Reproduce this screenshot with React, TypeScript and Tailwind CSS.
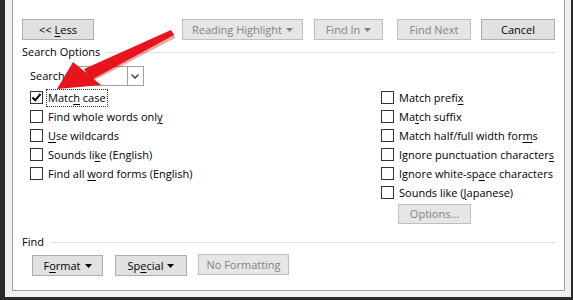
import React from 'react';

const Caret = ({ color = '#000' }: { color?: string }) => (
  <svg width="7" height="4" viewBox="0 0 7 4" className="ml-[4px] mt-[1px]">
    <path d="M0 0 L7 0 L3.5 4 Z" fill={color} />
  </svg>
);

const Btn = ({
  children,
  width,
  disabled,
  caret,
}: {
  children: React.ReactNode;
  width: string;
  disabled?: boolean;
  caret?: boolean;
}) => (
  <div
    className={`${width} h-[21px] flex items-center justify-center border ${
      disabled ? 'border-[#bfbfbf] bg-[#e6e6e6] text-[#838383]' : 'border-[#adadad] bg-[#e1e1e1] text-black'
    }`}
  >
    <span>{children}</span>
    {caret && <Caret color={disabled ? '#838383' : '#000'} />}
  </div>
);

const Check = ({ label, checked, focus }: { label: React.ReactNode; checked?: boolean; focus?: boolean }) => (
  <div className="h-[19px] flex items-center whitespace-nowrap">
    <div className="w-[13px] h-[13px] shrink-0 border border-[#333333] bg-white flex items-center justify-center">
      {checked && (
        <svg width="11" height="11" viewBox="0 0 11 11">
          <path d="M1.5 5.5 L4.2 8.3 L9.5 2" stroke="#000" strokeWidth="2" fill="none" />
        </svg>
      )}
    </div>
    <span className={`ml-[4px] px-[1px] leading-[16px] ${focus ? 'outline outline-1 outline-dotted outline-[#333]' : ''}`}>
      {label}
    </span>
  </div>
);

const U = ({ children }: { children: React.ReactNode }) => (
  <span className="underline underline-offset-[2px] decoration-1">{children}</span>
);

export default function App() {
  return (
    <div className="relative w-[573px] h-[300px] bg-[#2b2b2b] pl-[5px] pr-[2px] pb-[3px] font-['Open_Sans',sans-serif] text-[11px] text-black leading-[16px] overflow-hidden">
      <div className="h-full bg-[#f0f0f0] pl-[7px] pr-[6px] pb-[6px]">
        <div className="h-full bg-white border-x border-b border-[#a0a0a0] flex flex-col">
          {/* top buttons */}
          <div className="flex mt-[19px] ml-[9px]">
            <Btn width="w-[72px]">
              {'<< '}
              <U>L</U>ess
            </Btn>
            <div className="ml-[88px]">
              <Btn width="w-[121px]" disabled caret>
                Reading Highlight
              </Btn>
            </div>
            <div className="ml-[11px]">
              <Btn width="w-[69px]" disabled caret>
                Find In
              </Btn>
            </div>
            <div className="ml-[14px]">
              <Btn width="w-[74px]" disabled>
                Find Next
              </Btn>
            </div>
            <div className="ml-[10px]">
              <Btn width="w-[74px]">Cancel</Btn>
            </div>
          </div>

          {/* Search Options header */}
          <div className="flex items-center mt-[4px] ml-[9px] mr-[8px] h-[16px]">
            <span>Search Options</span>
            <div className="flex-1 h-px bg-[#dce3ea] ml-[5px]" />
          </div>

          {/* Search select */}
          <div className="flex items-center mt-[6px] ml-[17px] h-[20px]">
            <span>Search:</span>
            <div className="ml-[5px] w-[71px] h-[20px] border border-[#a0a0a0] flex items-center">
              <span className="flex-1 pl-[3px]">All</span>
              <div className="w-[16px] h-full border-l border-[#a0a0a0] flex items-center justify-center">
                <svg width="8" height="5" viewBox="0 0 8 5">
                  <path d="M0.5 0.5 L4 4 L7.5 0.5" stroke="#333" strokeWidth="1.3" fill="none" />
                </svg>
              </div>
            </div>
          </div>

          {/* options columns */}
          <div className="flex mt-[2px] ml-[17px]">
            <div className="w-[351px] shrink-0">
              <Check
                checked
                focus
                label={
                  <>
                    Matc<U>h</U> case
                  </>
                }
              />
              <Check
                label={
                  <>
                    Find whole words onl<U>y</U>
                  </>
                }
              />
              <Check
                label={
                  <>
                    <U>U</U>se wildcards
                  </>
                }
              />
              <Check
                label={
                  <>
                    Sounds li<U>k</U>e (English)
                  </>
                }
              />
              <Check
                label={
                  <>
                    Find all <U>w</U>ord forms (English)
                  </>
                }
              />
            </div>
            <div className="flex flex-col shrink-0">
              <Check
                label={
                  <>
                    Match prefi<U>x</U>
                  </>
                }
              />
              <Check
                label={
                  <>
                    Ma<U>t</U>ch suffix
                  </>
                }
              />
              <Check
                label={
                  <>
                    Match half/full width for<U>m</U>s
                  </>
                }
              />
              <Check
                label={
                  <>
                    Ignore punctuation character<U>s</U>
                  </>
                }
              />
              <Check
                label={
                  <>
                    Ignore white-sp<U>a</U>ce characters
                  </>
                }
              />
              <Check
                label={
                  <>
                    Sounds like (<U>J</U>apanese)
                  </>
                }
              />
              <div className="mt-[2px] ml-[17px]">
                <div className="w-[73px] h-[20px] flex items-center justify-center border border-[#bfbfbf] bg-[#e6e6e6] text-[#838383]">
                  Options...
                </div>
              </div>
            </div>
          </div>

          {/* Find header */}
          <div className="flex items-center mt-[10px] ml-[9px] mr-[8px] h-[16px]">
            <span>Find</span>
            <div className="flex-1 h-px bg-[#dce3ea] ml-[6px]" />
          </div>

          <div className="flex items-start mt-[4px] ml-[19px]">
            <div className="mt-[1px]">
              <Btn width="w-[71px]" caret>
                F<U>o</U>rmat
              </Btn>
            </div>
            <div className="mt-[1px] ml-[12px]">
              <Btn width="w-[72px]" caret>
                Sp<U>e</U>cial
              </Btn>
            </div>
            <div className="ml-[11px]">
              <Btn width="w-[91px]" disabled>
                No Formatting
              </Btn>
            </div>
          </div>
        </div>
      </div>

      {/* red annotation arrow */}
      <svg className="absolute left-0 top-0 pointer-events-none" width="573" height="300" viewBox="0 0 573 300">
        <path d="M84 72 L172 30 L174 36 L90 80 Z" fill="#b3080d" opacity="0.35" transform="translate(1 2)" />
        <path d="M84 69 L171 30 L174 35 L91 80 Z" fill="#e8141b" />
        <path d="M57 89 L73 62 L101 85 Z" fill="#e8141b" />
      </svg>
    </div>
  );
}
